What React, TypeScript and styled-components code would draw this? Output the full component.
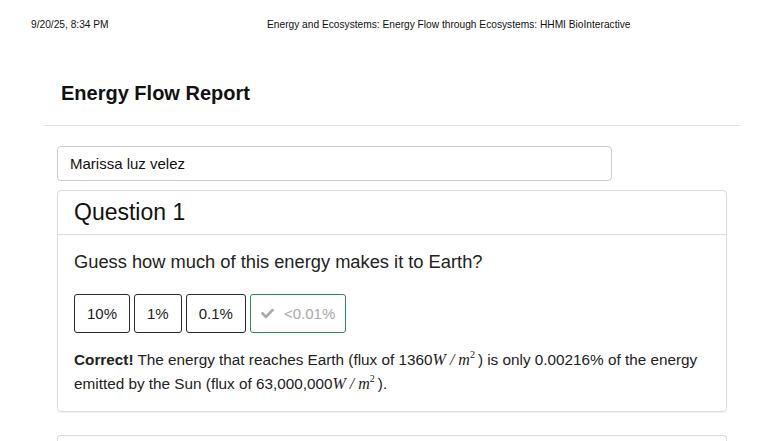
import React from "react";
import styled, { createGlobalStyle } from "styled-components";
import { FaCheck } from "react-icons/fa";

const Global = createGlobalStyle`
  html, body { margin: 0; padding: 0; background: #fff; }
  body { font-family: "Liberation Sans", Arial, sans-serif; color: #222; }
`;

const PrintHeader = styled.header`
  display: flex;
  align-items: center;
  height: 48px;
  padding-left: 31px;
  font-size: 10.2px;
  color: #111;
`;

const HeaderDate = styled.span`
  width: 236px;
`;

const Page = styled.main`
  padding: 0 44px;
`;

const TitleBar = styled.div`
  padding: 33px 0 20px 17px;
  border-bottom: 1px solid #dfe1e4;
`;

const Title = styled.h1`
  margin: 0;
  font-size: 20px;
  line-height: 24px;
  font-weight: 700;
  color: #111;
`;

const Content = styled.div`
  padding: 20px 13px 0;
  display: flex;
  flex-direction: column;
  gap: 9px;
`;

const NameInput = styled.div`
  width: 555px;
  height: 35px;
  box-sizing: border-box;
  border: 1px solid #c9cdd2;
  border-radius: 4px;
  padding: 0 12px;
  display: flex;
  align-items: center;
  font-size: 15px;
  color: #111;
`;

const Panel = styled.section`
  border: 1px solid #dcdcdc;
  border-radius: 4px;
  box-shadow: 0 1px 1px rgba(0, 0, 0, 0.05);
`;

const PanelHeading = styled.div`
  height: 44px;
  box-sizing: border-box;
  padding: 0 16px;
  display: flex;
  align-items: center;
  border-bottom: 1px solid #dcdcdc;
  font-size: 23px;
  color: #111;
`;

const PanelBody = styled.div`
  padding: 15px 16px 15px;
`;

const Prompt = styled.p`
  margin: 0 0 20px;
  font-size: 18.3px;
  line-height: 24px;
  color: #222;
`;

const Choices = styled.div`
  display: flex;
  gap: 4px;
  margin-bottom: 15px;
`;

const Choice = styled.div<{ $correct?: boolean }>`
  height: 39px;
  box-sizing: border-box;
  padding: 0 ${(p) => (p.$correct ? "10px" : "12px")};
  display: flex;
  align-items: center;
  gap: 10px;
  border: ${(p) => (p.$correct ? "1.5px solid #2a8a52" : "1.5px solid #2b2b2b")};
  border-radius: 3px;
  font-size: 15px;
  color: ${(p) => (p.$correct ? "#a9a9a9" : "#222")};
`;

const Feedback = styled.p`
  margin: 0;
  font-size: 15.3px;
  line-height: 24px;
  color: #222;
`;

const Strong = styled.strong`
  font-weight: 700;
`;

const MathUnit = styled.span`
  font-family: "Liberation Serif", "Times New Roman", serif;
  font-style: italic;
  font-size: 16px;
`;

const Sup = styled.sup`
  font-family: "Liberation Serif", serif;
  font-style: normal;
  font-size: 10px;
  vertical-align: 7px;
  line-height: 0;
  margin-right: 3px;
`;

const NextPanel = styled.section`
  margin-top: 14px;
  height: 40px;
  border: 1px solid #dcdcdc;
  border-bottom: none;
  border-radius: 4px 4px 0 0;
`;

const choices = ["10%", "1%", "0.1%"];

export default function App() {
  return (
    <>
      <Global />
      <PrintHeader>
        <HeaderDate>9/20/25, 8:34 PM</HeaderDate>
        <span>Energy and Ecosystems: Energy Flow through Ecosystems: HHMI BioInteractive</span>
      </PrintHeader>
      <Page>
        <TitleBar>
          <Title>Energy Flow Report</Title>
        </TitleBar>
        <Content>
          <NameInput>Marissa luz velez</NameInput>
          <Panel>
            <PanelHeading>Question 1</PanelHeading>
            <PanelBody>
              <Prompt>Guess how much of this energy makes it to Earth?</Prompt>
              <Choices>
                {choices.map((c) => (
                  <Choice key={c}>{c}</Choice>
                ))}
                <Choice $correct>
                  <FaCheck size={13} color="#a9a9a9" />
                  &lt;0.01%
                </Choice>
              </Choices>
              <Feedback>
                <Strong>Correct!</Strong> The energy that reaches Earth (flux of 1360
                <MathUnit>W / m</MathUnit>
                <Sup>2</Sup>) is only 0.00216% of the energy emitted by the Sun (flux of 63,000,000
                <MathUnit>W / m</MathUnit>
                <Sup>2</Sup>).
              </Feedback>
            </PanelBody>
          </Panel>
          <NextPanel />
        </Content>
      </Page>
    </>
  );
}
